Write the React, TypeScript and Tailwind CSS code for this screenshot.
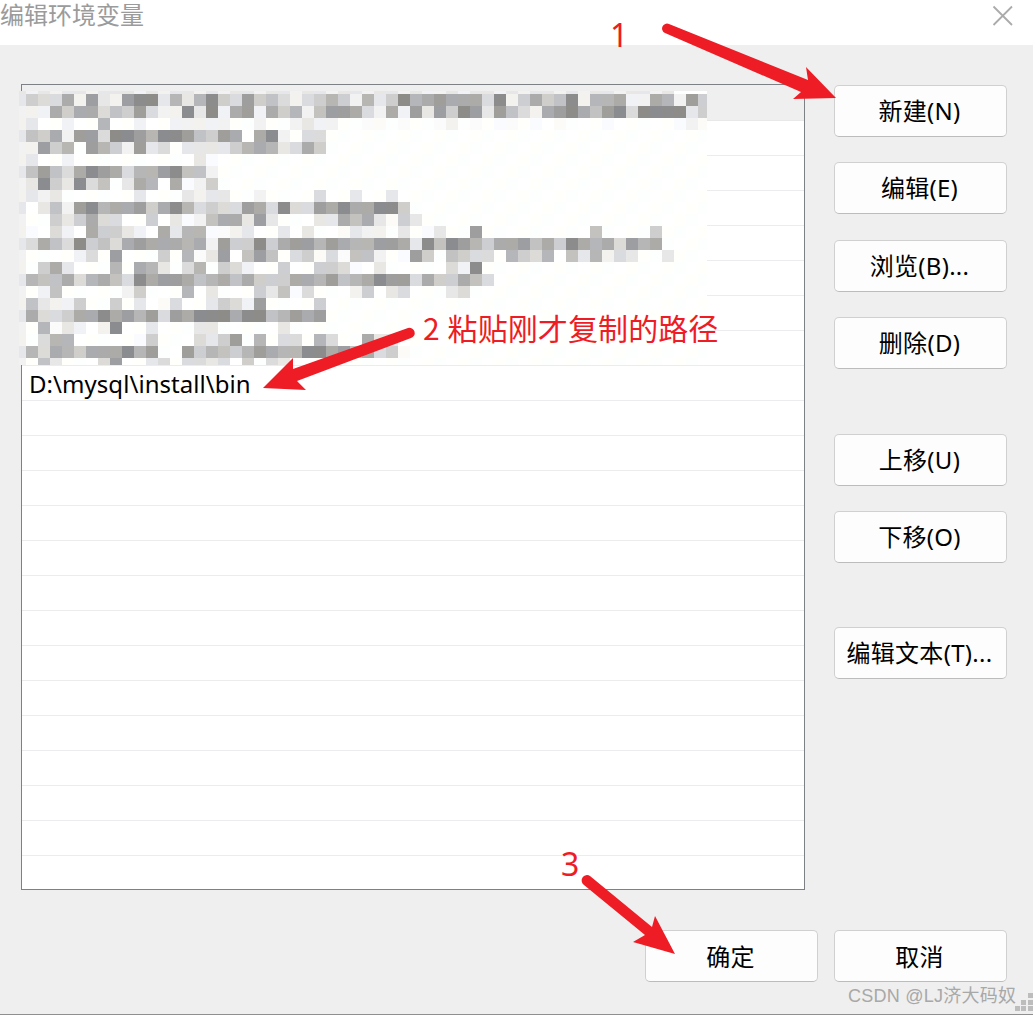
const LEVELS: Record<string, string> = {
  "0": "#ffffff", ".": "#fbfbfb", "1": "#f2f2f2", "2": "#e7e7e7", "3": "#dbdbdb", "4": "#cecece",
  "5": "#c2c2c2", "6": "#b6b6b6", "7": "#ababab", "8": "#9e9e9e", "9": "#8c8c8c",
};

const ROWS = [
  "2121221222121221212212212212212212112122121221212212212",
  "4337182189926269438453134641" + "62496787773914745916671176184",
  "1174773548311929178174615887" + "31718284982853178975893999924",
  "2001006001001111100100121100" + "..0.00.10.0..0.0.000.00000.1.",
  "5471883998699854870791033000",
  "1846086418230222246762374000",
  "200100000000002.",
  "5853798736689551",
  "2942935027607.14",
  "2120000002000212200100003002" + "002",
  "0251896778479634338739338797" + "7994",
  "00424733" + "0040" + "2." + "1577" + "282" + "000" + "2275" + "72.42",
  ".0310744" + "2107266." + ".1200202" + "00.2" + "11020.2008" + "000000000" + "5" + "0000" + "4",
  "3753945378777671844947886876" + "6887295986477857497673867",
  "0000" + "1308000406" + ".280585034" + ".3.5" + "510.84054330643605261320020",
  "04720006" + "07620360" + "43100400" + "443." + "0200000319",
  "6557367539788756757444776856" + "79883744753",
  "0150000014000602000425.30001" + "402300023",
  "52114004" + "020.3002" + "43180000" + "4",
  "7334779786838799979956878",
  "06.21019002000220000020",
  "03660000" + "0.400032" + "48060330" + "6300" + "722",
  "6376477796800846546876699785" + "734.",
  "0520003800230332304032",
];

function Mosaic() {
  const cells: { key: string; color: string }[] = [];
  ROWS.forEach((row, r) => {
    const isEdgeRow = r === 0;
    for (let c = 0; c < 58; c++) {
      let ch: string;
      if (isEdgeRow) ch = row[c] ?? "0";
      else if (c === 0) ch = r % 3 === 1 ? "2" : "1";
      else ch = row[c - 1] ?? "0";
      const g = LEVELS[ch] ?? "#ffffff";
      const n = (r * 7 + c * 13) % 3;
      const v = parseInt(g.slice(1, 3), 16);
      const rc = Math.min(255, v + (n === 0 ? 2 : n === 1 ? -2 : 0));
      const bc = Math.min(255, v + (n === 0 ? -4 : n === 1 ? 4 : 0));
      cells.push({ key: `${r}-${c}`, color: `rgb(${rc},${v},${bc})` });
    }
  });
  return (
    <div className="absolute left-[19px] top-[91px] w-[688px] overflow-hidden">
      <div className="grid grid-cols-[7px_repeat(57,12px)] grid-rows-[3px_repeat(22,12px)_7px] w-[691px]">
        {cells.map((cell) => (
          <div key={cell.key} style={{ backgroundColor: cell.color }} />
        ))}
      </div>
    </div>
  );
}

function Btn({ label, className = "" }: { label: string; className?: string }) {
  return (
    <button className={`w-[173px] h-[52px] shrink-0 rounded-[5px] border border-[#d0d0d0] border-b-[#bcbcbc] bg-[#fdfdfd] text-[24px] leading-none tracking-[0.3px] text-black flex items-center justify-center whitespace-nowrap pr-[2px] ${className}`}>
      {label}
    </button>
  );
}

export default function App() {
  return (
    <div className="relative w-[1033px] h-[1015px] overflow-hidden bg-white font-['Noto_Sans','Noto_Sans_CJK_SC',sans-serif]">
      <header className="h-[45px] flex items-start justify-between">
        <span className="text-[24px] leading-[32px] text-[#9b9b9b] font-['Liberation_Sans','Noto_Sans_CJK_SC',sans-serif]">编辑环境变量</span>
        <svg width="22" height="22" viewBox="0 0 22 22" className="mt-[5px] mr-[19px]" fill="none" stroke="#ababab" strokeWidth="1.8">
          <path d="M1.5 1.5 L20 20 M20 1.5 L1.5 20" />
        </svg>
      </header>

      <main className="h-[970px] bg-[#efefef] border-b border-b-[#8f8f8f] pl-[21px] pt-[39px]">
        <div className="flex">
          <div className="w-[784px] h-[806px] border border-[#7d8085] bg-white flex flex-col overflow-hidden">
            <div className="h-[36px] shrink-0 bg-[#efefef] border-b border-[#e8e8e8]" />
            {Array.from({ length: 22 }).map((_, i) => (
              <div key={i} className="h-[35px] shrink-0 border-b border-[#ececee] flex items-center pl-[7px] pt-[2px] text-[24px] leading-none tracking-[0.05px] text-black">
                {i === 7 ? "D:\\mysql\\install\\bin" : ""}
              </div>
            ))}
          </div>
          <div className="ml-[29px] pt-px flex flex-col">
            <Btn label="新建(N)" />
            <Btn label="编辑(E)" className="mt-[25px]" />
            <Btn label="浏览(B)..." className="mt-[26px]" />
            <Btn label="删除(D)" className="mt-[25px]" />
            <Btn label="上移(U)" className="mt-[65px]" />
            <Btn label="下移(O)" className="mt-[25px]" />
            <Btn label="编辑文本(T)..." className="mt-[64px]" />
          </div>
        </div>
        <div className="mt-[40px] pr-[26px] flex justify-end gap-4">
          <Btn label="确定" className="pt-px" />
          <Btn label="取消" className="pt-px" />
        </div>
      </main>

      <Mosaic />

      <svg width="1033" height="1015" viewBox="0 0 1033 1015" className="absolute left-0 top-0 pointer-events-none" fill="#ee1c25">
        <path d="M669 24 L808 80 L806 67 L836 98 L793 99 L801 92 L665 33 A4.8 4.8 0 0 1 669 24 Z" />
        <path d="M408 328 L293 369 L293 358 L263 388 L306 390 L297 381 L411 338 A5 5 0 0 0 408 328 Z" />
        <path d="M590 876 L652 927 L655 916 L675 954 L633 942 L645 935 L584 885 A4.8 4.8 0 0 1 590 876 Z" />
      </svg>

      <svg width="18" height="20" viewBox="0 0 18 20" className="absolute left-[1015px] top-[993px]" fill="#bdbdbd">
        <rect x="13" y="0" width="5" height="5" />
        <rect x="6" y="7" width="5" height="5" />
        <rect x="13" y="7" width="5" height="5" />
        <rect x="0" y="13" width="5" height="5" />
        <rect x="6" y="13" width="5" height="5" />
        <rect x="13" y="13" width="5" height="5" />
      </svg>

      <span className="absolute left-[610px] top-[13px] text-[32px] leading-[44px] text-[#ee1c25]">1</span>
      <span className="absolute left-[423px] top-[305px] text-[30px] leading-[44px] text-[#ee1c25] whitespace-nowrap [word-spacing:1px] tracking-[0.1px] font-['Noto_Sans_CJK_SC',sans-serif]">2 粘贴刚才复制的路径</span>
      <span className="absolute left-[561px] top-[842px] text-[32px] leading-[44px] text-[#ee1c25]">3</span>
      <span className="absolute left-[848px] top-[984px] text-[18px] leading-[24px] tracking-[0.25px] text-[#a8a8a8] whitespace-nowrap font-['Liberation_Sans','Noto_Sans_CJK_SC',sans-serif]">CSDN @LJ济大码奴</span>
    </div>
  );
}
